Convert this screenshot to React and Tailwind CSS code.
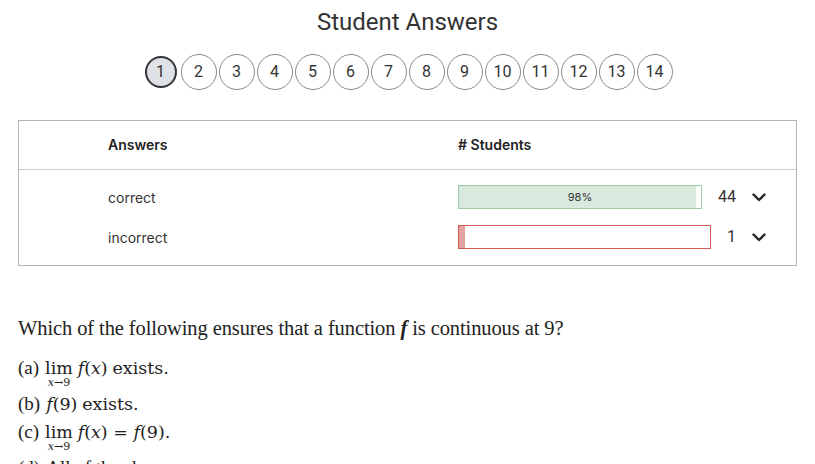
import { useState } from "react";

const rows = [
  { label: "correct", count: 44, pct: 98, tone: "green" },
  { label: "incorrect", count: 1, pct: 2.2, tone: "red" },
];

export default function App() {
  const [active, setActive] = useState(1);

  return (
    <div className="bg-white min-h-screen text-[#333]" style={{ fontFamily: "Roboto, 'Liberation Sans', sans-serif" }}>
      {/* Title */}
      <h1 className="pt-[8px] text-center text-[24px] leading-[28px] text-[#333]">Student Answers</h1>

      {/* Question pager */}
      <div className="mt-[18px] flex justify-center">
        {Array.from({ length: 14 }, (_, i) => i + 1).map((n) => (
          <div key={n} className="w-[38px] h-[36px] flex items-center justify-center">
            <button
              onClick={() => setActive(n)}
              className={
                n === active
                  ? "w-[32px] h-[32px] rounded-full border-2 border-[#333] bg-[#dfe2e6] flex items-center justify-center text-[16px]"
                  : "w-[36px] h-[36px] rounded-full border border-[#8a8a8a] bg-white flex items-center justify-center text-[16px]"
              }
            >
              {n}
            </button>
          </div>
        ))}
      </div>

      {/* Results table */}
      <div className="mt-[30px] mx-[18px] border border-[#aeb7bf] text-[14px]" style={{ fontFamily: "Inter, Roboto, sans-serif" }}>
        <div className="grid grid-cols-[89px_350px_1fr] h-[49px] items-center border-b border-[#c9cccf]">
          <div />
          <div className="font-semibold text-[#222] -mt-[2px]">Answers</div>
          <div className="font-semibold text-[#222] -mt-[2px]"># Students</div>
        </div>
        <div className="pt-[7px] pb-[8px]">
          {rows.map((r) => (
            <div key={r.label} className="grid grid-cols-[89px_350px_1fr] h-[40px] items-center">
              <div />
              <div className="text-[#333]">{r.label}</div>
              <div className="flex items-center pr-[30px]">
                <div
                  className={
                    r.tone === "green"
                      ? "relative flex-1 h-[24px] border border-[#9ccaa2] bg-white"
                      : "relative flex-1 h-[24px] border border-[#d25a50] bg-white"
                  }
                >
                  <div
                    className={r.tone === "green" ? "h-full bg-[#d9e9de]" : "h-full bg-[#e4a3a0]"}
                    style={{ width: `${r.pct}%` }}
                  />
                  {r.tone === "green" && (
                    <span className="absolute inset-0 flex items-center justify-center text-[11px] text-[#333]">
                      {r.pct}%
                    </span>
                  )}
                </div>
                <span className="ml-[16px] text-[16px] text-[#333]" style={{ fontFamily: "Roboto, sans-serif" }}>
                  {r.count}
                </span>
                <svg className="ml-[16px]" width="14" height="9" viewBox="0 0 14 9" fill="none">
                  <polyline points="1.5,1.5 7,7 12.5,1.5" stroke="#222" strokeWidth="2.4" strokeLinecap="round" strokeLinejoin="round" />
                </svg>
              </div>
            </div>
          ))}
        </div>
      </div>

      {/* Question */}
      <div className="mt-[50px] px-[18px] text-[#222]" style={{ fontFamily: "'Liberation Serif', serif" }}>
        <p className="text-[20.5px] leading-[24px] tracking-[-0.1px]">
          Which of the following ensures that a function <i className="font-bold">f</i> is continuous at 9?
        </p>
        <div className="mt-[16px] text-[19px] leading-[24px]">
          <Option tag="(a)">
            <Lim /> <M><i>f</i>(<i>x</i>)</M> <M>exists.</M>
          </Option>
          <Option tag="(b)">
            <M><i>f</i>(9)</M> <M>exists.</M>
          </Option>
          <Option tag="(c)">
            <Lim /> <M><i>f</i>(<i>x</i>) = <i>f</i>(9).</M>
          </Option>
          <Option tag="(d)">All of the above</Option>
        </div>
      </div>
    </div>
  );
}

function M({ children }) {
  return (
    <span className="text-[17.5px]" style={{ fontFamily: "'DejaVu Serif', serif" }}>
      {children}
    </span>
  );
}

function Option({ tag, children }) {
  return (
    <div className="flex items-start mb-[4px]">
      <span className="mr-[6px]">{tag}</span>
      <span>{children}</span>
    </div>
  );
}

function Lim() {
  return (
    <span className="inline-flex flex-col items-center align-top leading-none">
      <span className="text-[17.5px] leading-[24px]" style={{ fontFamily: "'DejaVu Serif', serif" }}>lim</span>
      <span className="text-[11px] leading-[10px] -mt-[2px]" style={{ fontFamily: "'DejaVu Serif', serif" }}>
        <i>x</i>→9
      </span>
    </span>
  );
}
